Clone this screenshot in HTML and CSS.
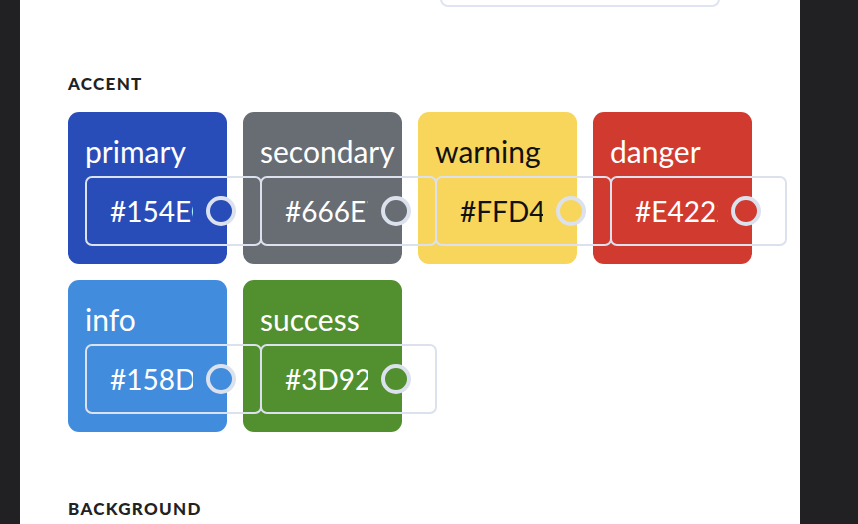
FILE: index.html
```html
<!DOCTYPE html>
<html>
<head>
<meta charset="utf-8">
<link rel="stylesheet" href="styles.css">
</head>
<body>
<main class="panel">
  <div class="prev-field"></div>

  <h2 class="section-title accent-title">Accent</h2>
  <div class="swatches">
    <div class="card primary">
      <div class="card-name">primary</div>
      <div class="hex-field"><div class="hex-value">#154EC1</div><span class="dot"></span></div>
    </div>
    <div class="card secondary">
      <div class="card-name">secondary</div>
      <div class="hex-field"><div class="hex-value">#666E75</div><span class="dot"></span></div>
    </div>
    <div class="card warning">
      <div class="card-name">warning</div>
      <div class="hex-field"><div class="hex-value">#FFD43B</div><span class="dot"></span></div>
    </div>
    <div class="card danger">
      <div class="card-name">danger</div>
      <div class="hex-field"><div class="hex-value">#E42222</div><span class="dot"></span></div>
    </div>
    <div class="card info">
      <div class="card-name">info</div>
      <div class="hex-field"><div class="hex-value">#158DE3</div><span class="dot"></span></div>
    </div>
    <div class="card success">
      <div class="card-name">success</div>
      <div class="hex-field"><div class="hex-value">#3D921F</div><span class="dot"></span></div>
    </div>
  </div>

  <h2 class="section-title bg-title">Background</h2>
</main>
</body>
</html>
```

FILE: styles.css
```css
html, body {
  margin: 0;
  padding: 0;
  height: 100%;
  overflow: hidden;
}
body {
  background: #212123;
  font-family: Lato, "Liberation Sans", sans-serif;
}
.panel {
  margin-left: 20px;
  width: 780px;
  min-height: 100%;
  background: #ffffff;
  padding: 0 0 0 48px;
  box-sizing: border-box;
  overflow: hidden;
}
.prev-field {
  width: 280px;
  height: 50px;
  margin: -43px 0 0 372px;
  border: 2px solid #e0e4f2;
  border-radius: 8px;
  box-sizing: border-box;
}
.section-title {
  margin: 0;
  font-size: 17px;
  line-height: 20px;
  font-weight: 900;
  letter-spacing: 1.3px;
  text-transform: uppercase;
  color: #222222;
}
.accent-title {
  margin-top: 67px;
  margin-bottom: 18px;
}
.bg-title {
  margin-top: 67px;
}
.swatches {
  display: grid;
  grid-template-columns: repeat(4, 159px);
  column-gap: 16px;
  row-gap: 16px;
}
.card {
  height: 152px;
  box-sizing: border-box;
  padding: 24px 17px 0 17px;
  border-radius: 11px;
  color: #ffffff;
}
.card-name {
  font-size: 30px;
  line-height: 30px;
  white-space: nowrap;
}
.hex-field {
  position: relative;
  margin-top: 10px;
  width: 177px;
  height: 70px;
  box-sizing: border-box;
  border: 2px solid #dce1ee;
  border-radius: 7px;
  padding-left: 23px;
  display: flex;
  align-items: center;
}
.hex-value {
  width: 83px;
  overflow: hidden;
  white-space: nowrap;
  font-size: 28px;
  line-height: 34px;
}
.dot {
  margin-left: 13px;
  width: 30px;
  height: 30px;
  box-sizing: border-box;
  border-radius: 50%;
  border: 4px solid #dce1ee;
  flex: none;
}
.primary { background: #284db8; }
.primary .dot { background: #284db8; }
.secondary { background: #676d73; }
.secondary .dot { background: #676d73; }
.warning { background: #f8d65c; color: #111111; }
.warning .dot { background: #f8d65c; }
.danger { background: #d13a2f; }
.danger .dot { background: #d13a2f; }
.info { background: #418cdc; }
.info .dot { background: #418cdc; }
.success { background: #528f2e; }
.success .dot { background: #528f2e; }
```
